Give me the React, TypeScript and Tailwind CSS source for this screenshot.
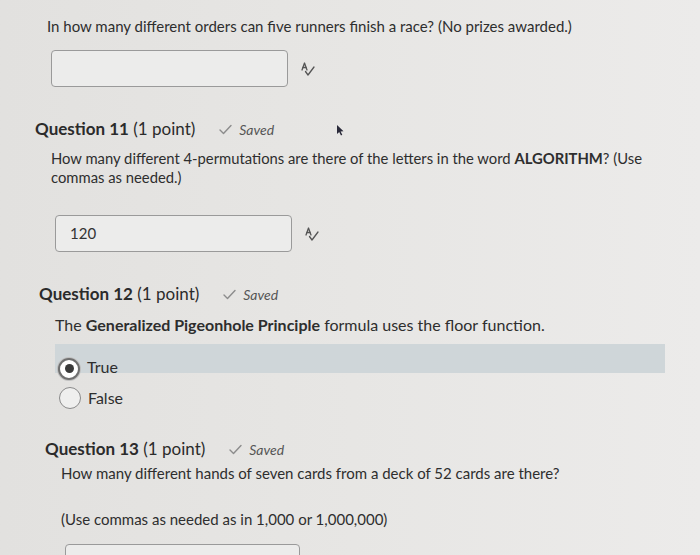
import React from 'react';

const SpellIcon: React.FC = () => (
    <svg width="16" height="16" viewBox="0 0 16 16" fill="none" stroke="#555" strokeWidth="1.3" strokeLinecap="round" strokeLinejoin="round">
        <path d="M2 9 L4.5 2 L7 9" />
        <path d="M3 6.5 H6" />
        <path d="M5.5 10.5 L8 14 L14 6" />
    </svg>
);

const SavedTag: React.FC = () => (
    <span className="flex items-center gap-[7px] text-[14px] italic text-[#555]">
        <svg width="13" height="11" viewBox="0 0 13 11" fill="none" stroke="#8c8c8c" strokeWidth="1.4" strokeLinecap="round" strokeLinejoin="round">
            <path d="M1 6 L4.5 9.5 L12 1.5" />
        </svg>
        Saved
    </span>
);

interface HeaderProps {
    num: number;
}

const QuestionHeader: React.FC<HeaderProps> = ({ num }) => (
    <div className="flex items-center h-6 gap-6">
        <h2 className="text-[17px] text-[#2b2b2b]">
            <span className="font-bold">Question {num}</span> (1 point)
        </h2>
        <SavedTag />
    </div>
);

const AnswerBox: React.FC<{ value?: string; className?: string }> = ({ value, className }) => (
    <div className={`flex items-center gap-3 ${className ?? ''}`}>
        <div className="w-[237px] h-[37px] rounded-[4px] border border-[#9a9a9a] bg-[#ececeb] flex items-center px-[14px] text-[15px] text-[#333]">
            {value}
        </div>
        <SpellIcon />
    </div>
);

const Radio: React.FC<{ checked?: boolean }> = ({ checked }) =>
    checked ? (
        <span className="w-[22px] h-[22px] rounded-full border-[2.5px] border-[#6f6f6f] bg-white ring-1 ring-[#bfbfbf] flex items-center justify-center">
            <span className="w-[9px] h-[9px] rounded-full bg-[#3a3a3a]" />
        </span>
    ) : (
        <span className="w-[22px] h-[22px] rounded-full border border-[#8a8a8a] bg-[#efefee]" />
    );

export default function App() {
    return (
        <div
            className="relative w-[700px] h-[555px] overflow-hidden bg-gradient-to-r from-[#e2e1df] via-[#e7e6e4] to-[#ecebea] text-[#2e2e2e]"
            style={{ fontFamily: 'Lato, "Open Sans", sans-serif' }}
        >
            {/* previous question */}
            <p className="pt-4 pl-[47px] text-[15px] leading-5">
                In how many different orders can five runners finish a race? (No prizes awarded.)
            </p>
            <AnswerBox className="mt-[14px] ml-[51px]" />

            {/* question 11 */}
            <div className="mt-[30px] pl-[35px]">
                <QuestionHeader num={11} />
            </div>
            <p className="mt-2 pl-[51px] pr-[40px] text-[14.8px] leading-[19px]">
                How many different 4-permutations are there of the letters in the word <span className="font-bold">ALGORITHM</span>? (Use commas as needed.)
            </p>
            <AnswerBox value="120" className="mt-[28px] ml-[55px]" />

            {/* question 12 */}
            <div className="mt-[30px] pl-[39px]">
                <QuestionHeader num={12} />
            </div>
            <p className="mt-2 pl-[55px] text-[16px] leading-[22px]">
                The <span className="font-bold">Generalized Pigeonhole Principle</span> formula uses the floor function.
            </p>
            <div className="mt-2 ml-[55px] w-[610px] h-[29px] bg-[#cfd6d9] flex items-center pl-[3px] gap-[7px]">
                <span className="mt-[20px]"><Radio checked /></span>
                <span className="text-[16px] mt-[16px]">True</span>
            </div>
            <div className="mt-[10px] ml-[59px] h-[30px] flex items-center gap-[7px]">
                <Radio />
                <span className="text-[16px]">False</span>
            </div>

            {/* question 13 */}
            <div className="mt-6 pl-[45px]">
                <QuestionHeader num={13} />
            </div>
            <p className="mt-[3px] pl-[61px] text-[15px] leading-[19px]">
                How many different hands of seven cards from a deck of 52 cards are there?
            </p>
            <p className="mt-[26px] pl-[61px] text-[15px] leading-5">
                (Use commas as needed as in 1,000 or 1,000,000)
            </p>
            <div className="mt-[15px] ml-[65px] w-[235px] h-[37px] rounded-[4px] border border-[#9a9a9a] bg-[#ececeb]" />

            {/* mouse pointer over the page */}
            <svg className="absolute left-[336px] top-[124px]" width="8" height="12" viewBox="0 0 8 12">
                <path d="M1 1 L1 10 L3.2 8 L5 11.5 L6.3 10.8 L4.6 7.5 L7.5 7.3 Z" fill="#2a2a3a" />
            </svg>
        </div>
    );
}
